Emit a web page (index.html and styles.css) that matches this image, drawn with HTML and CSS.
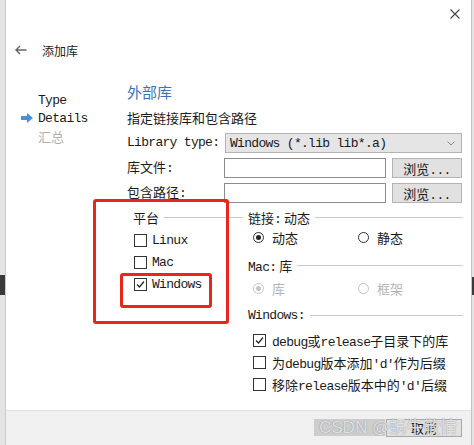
FILE: index.html
```html
<!DOCTYPE html>
<html lang="zh-CN">
<head>
    <meta charset="UTF-8">
    <title>添加库</title>
    <link rel="stylesheet" href="styles.css">
</head>
<body>
<div class="screen">
    <div class="edge edge-left"><span class="knob"></span></div>

    <div class="dialog">
        <!-- top bar with close button -->
        <div class="topbar">
            <svg class="close" viewBox="0 0 10 10" width="10" height="10">
                <path d="M0.5 0.5 L9.5 9.5 M9.5 0.5 L0.5 9.5" />
            </svg>
        </div>

        <div class="title-row">
            <svg class="back" viewBox="0 0 12 10" width="12" height="10">
                <path d="M11.5 5 H1 M5 1 L1 5 L5 9" />
            </svg>
            <span>添加库</span>
        </div>

        <div class="main">
            <!-- wizard steps -->
            <div class="nav">
                <div class="nav-item"><span class="nav-icon"></span><span class="en">Type</span></div>
                <div class="nav-item">
                    <svg class="nav-icon" viewBox="0 0 12 10" width="12" height="10">
                        <path d="M0 3 H6 V0 L12 5 L6 10 V7 H0 Z" />
                    </svg>
                    <span class="en">Details</span>
                </div>
                <div class="nav-item muted"><span class="nav-icon"></span><span>汇总</span></div>
            </div>

            <div class="content">
                <h2>外部库</h2>
                <p class="lead">指定链接库和包含路径</p>

                <div class="fields">
                    <label class="en">Library type:</label>
                    <div class="select">
                        <span class="en">Windows (*.lib lib*.a)</span>
                        <svg class="chev" viewBox="0 0 8 5" width="8" height="5">
                            <path d="M0.5 0.5 L4 4 L7.5 0.5" />
                        </svg>
                    </div>

                    <label>库文件<span class="en">:</span></label>
                    <input type="text" class="field">
                    <button type="button" class="btn">浏览<span class="en">...</span></button>

                    <label>包含路径<span class="en">:</span></label>
                    <input type="text" class="field">
                    <button type="button" class="btn">浏览<span class="en">...</span></button>
                </div>

                <div class="groups">
                    <!-- platform group -->
                    <div class="group platform">
                        <div class="group-title"><span>平台</span><span class="rule"></span></div>
                        <div class="opt"><span class="cb"></span><span class="en">Linux</span></div>
                        <div class="opt"><span class="cb"></span><span class="en">Mac</span></div>
                        <div class="opt">
                            <span class="cb">
                                <svg viewBox="0 0 11 11" width="11" height="11"><path d="M2 5.5 L4.5 8 L9 2.5" /></svg>
                            </span>
                            <span class="en">Windows</span>
                        </div>
                    </div>

                    <!-- linkage / mac / windows options -->
                    <div class="group">
                        <div class="group-title"><span>链接<span class="en">:</span> 动态</span><span class="rule"></span></div>
                        <div class="radios">
                            <div class="opt"><span class="rb on"></span><span>动态</span></div>
                            <div class="opt"><span class="rb"></span><span>静态</span></div>
                        </div>

                        <div class="group-title sub"><span><span class="en">Mac:</span> 库</span><span class="rule"></span></div>
                        <div class="radios disabled">
                            <div class="opt"><span class="rb on"></span><span>库</span></div>
                            <div class="opt"><span class="rb"></span><span>框架</span></div>
                        </div>

                        <div class="group-title sub2"><span class="en">Windows:</span><span class="rule"></span></div>
                        <div class="opt checks">
                            <span class="cb">
                                <svg viewBox="0 0 11 11" width="11" height="11"><path d="M2 5.5 L4.5 8 L9 2.5" /></svg>
                            </span>
                            <span><span class="en">debug</span>或<span class="en">release</span>子目录下的库</span>
                        </div>
                        <div class="opt checks">
                            <span class="cb"></span>
                            <span>为<span class="en">debug</span>版本添加<span class="en">'d'</span>作为后缀</span>
                        </div>
                        <div class="opt checks">
                            <span class="cb"></span>
                            <span>移除<span class="en">release</span>版本中的<span class="en">'d'</span>后缀</span>
                        </div>
                    </div>
                </div>
            </div>
        </div>

        <div class="footer">
            <button type="button" class="btn cancel">取消</button>
        </div>
    </div>

    <div class="edge edge-right"><span class="knob"></span></div>

    <!-- annotation boxes and watermark drawn over the dialog -->
    <div class="mark mark-outer"></div>
    <div class="mark mark-inner"></div>
    <div class="watermark"><span class="wm-bg"></span><span class="wm-text">CSDN @蜗牛敬情</span></div>
</div>
</body>
</html>
```

FILE: styles.css
```css
/* Page base */
* {
    box-sizing: border-box;
}

body {
    margin: 0;
    font-family: "Noto Sans CJK SC", sans-serif;
    font-size: 13px;
    color: #1a1a1a;
    background: #fff;
}

/* Latin text in the dialog uses a narrow monospace face */
.en {
    font-family: "Liberation Mono", monospace;
    font-size: 13px;
    letter-spacing: -0.7px;
}

.screen {
    position: relative;
    display: flex;
    width: 474px;
    height: 445px;
    overflow: hidden;
}

/* Window edges left and right of the dialog */
.edge {
    flex: none;
    background: #e4e4e4;
}

.edge-left {
    width: 6px;
    border-right: 1px solid #cacaca;
}

.edge-right {
    width: 2px;
}

.knob {
    display: block;
    height: 20px;
    background: #3a3a3a;
}

.edge-left .knob {
    margin-top: 275px;
}

.edge-right .knob {
    margin-top: 277px;
    height: 18px;
}

/* Dialog */
.dialog {
    flex: 1;
    min-width: 0;
    display: flex;
    flex-direction: column;
    border-right: 1px solid #c2c2c2;
}

.topbar {
    height: 40px;
    display: flex;
    justify-content: flex-end;
    padding: 9px 11px 0 0;
}

.close path,
.back path {
    fill: none;
    stroke: #444;
    stroke-width: 1.1;
}

.title-row {
    height: 20px;
    display: flex;
    align-items: center;
    gap: 15px;
    padding-left: 9px;
    font-size: 12px;
    color: #222;
}

.back path {
    stroke: #666;
    stroke-width: 1.4;
}

.main {
    flex: 1;
    display: flex;
}

/* Wizard steps on the left */
.nav {
    width: 121px;
    flex: none;
    padding: 31px 0 0 15px;
}

.nav-item {
    display: flex;
    align-items: center;
    gap: 5px;
    height: 18px;
}

.nav-icon {
    width: 12px;
    height: 10px;
    flex: none;
}

svg.nav-icon path {
    fill: #4a8fdb;
}

.nav-item.muted {
    color: #b0b0b0;
}

/* Page content */
.content {
    flex: 1;
    min-width: 0;
    padding: 22px 9px 0 0;
}

h2 {
    margin: 0;
    font-size: 15px;
    font-weight: normal;
    line-height: 20px;
    color: #3a74b8;
}

.lead {
    margin: 6px 0 0;
    line-height: 20px;
}

.fields {
    display: grid;
    grid-template-columns: 91px 162px 70px;
    grid-auto-rows: 20px;
    column-gap: 6px;
    row-gap: 5px;
    margin-top: 5px;
    align-items: center;
}

.fields label {
    line-height: 20px;
    white-space: nowrap;
}

.select {
    grid-column: span 2;
    height: 20px;
    margin-left: 1px;
    display: flex;
    align-items: center;
    justify-content: space-between;
    padding: 0 6px 0 4px;
    background: #e5e5e5;
    border: 1px solid #b4b4b4;
}

.chev path {
    fill: none;
    stroke: #888;
    stroke-width: 1;
}

.field {
    width: 100%;
    height: 20px;
    margin: 0;
    border: 1px solid #8c8c8c;
    background: #fff;
    padding: 0 3px;
}

.btn {
    height: 20px;
    margin: 0;
    padding: 0;
    font-family: "Noto Sans CJK SC", sans-serif;
    font-size: 13px;
    color: #1a1a1a;
    background: #e1e1e1;
    border: 1px solid #b4b4b4;
}

/* Option groups */
.groups {
    display: grid;
    grid-template-columns: 110px 215px;
    column-gap: 5px;
    margin: 5px 0 0 6px;
}

.group-title {
    display: flex;
    align-items: center;
    gap: 5px;
    height: 18px;
}

.rule {
    flex: 1;
    border-top: 1px solid #c9c9c9;
}

.group-title.sub {
    margin-top: 8px;
}

.group-title.sub2 {
    margin-top: 7px;
}

.opt {
    display: flex;
    align-items: center;
    gap: 5px;
    height: 22px;
}

.group > .opt:nth-child(2) {
    margin-top: 3px;
}

.platform .opt {
    padding-left: 1px;
}

.group .opt.checks {
    padding-left: 5px;
    gap: 6px;
}

.group-title + .opt.checks {
    margin-top: 5px;
}

.cb {
    width: 13px;
    height: 13px;
    flex: none;
    border: 1px solid #333;
    background: #fff;
    display: flex;
    align-items: center;
    justify-content: center;
}

.cb path {
    fill: none;
    stroke: #222;
    stroke-width: 1.2;
}

.radios {
    display: grid;
    grid-template-columns: 105px 1fr;
    padding-left: 5px;
}

.radios .opt {
    gap: 8px;
}

.rb {
    width: 11px;
    height: 11px;
    flex: none;
    border: 1px solid #333;
    border-radius: 50%;
    display: flex;
    align-items: center;
    justify-content: center;
}

.rb.on::after {
    content: "";
    width: 5px;
    height: 5px;
    border-radius: 50%;
    background: #222;
}

.radios.disabled {
    color: #b4b4b4;
    margin-top: 3px;
}

.radios.disabled .rb {
    border-color: #c4c4c4;
}

.radios.disabled .rb.on::after {
    background: #c4c4c4;
}

/* Footer buttons */
.footer {
    height: 35px;
    flex: none;
    display: flex;
    justify-content: flex-end;
    align-items: flex-start;
    padding: 8px 9px 0 0;
    background: #f0f0f0;
    border-top: 1px solid #e2e2e2;
}

.btn.cancel {
    width: 76px;
    height: 18px;
    line-height: 16px;
    border-color: #a8a8a8;
}

/* Red annotation boxes */
.mark {
    position: absolute;
    border: 3px solid #e8261c;
    border-radius: 3px;
}

.mark-outer {
    left: 93px;
    top: 199px;
    width: 136px;
    height: 125px;
}

.mark-inner {
    left: 120px;
    top: 273px;
    width: 92px;
    height: 35px;
}

/* Watermark over the footer */
.watermark {
    position: absolute;
    left: 314px;
    top: 418px;
    height: 19px;
}

.wm-bg {
    position: absolute;
    left: 0;
    top: 1px;
    width: 71px;
    height: 17px;
    background: #cdcdcd;
}

.wm-text {
    position: relative;
    display: block;
    padding-left: 5px;
    font-family: "Liberation Sans", "Noto Sans CJK SC", sans-serif;
    font-size: 17px;
    line-height: 19px;
    color: rgba(255, 255, 255, 0.75);
    text-shadow: 0 0 1px #777;
    white-space: nowrap;
}
```
